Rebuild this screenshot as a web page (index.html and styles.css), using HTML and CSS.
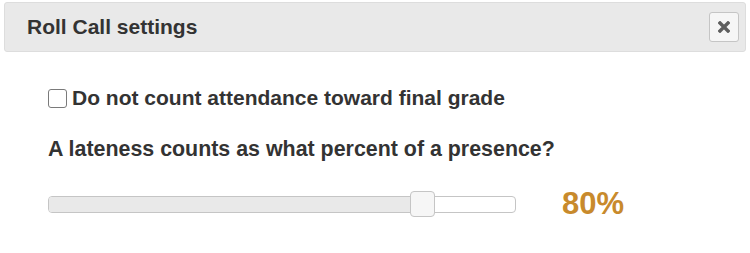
FILE: index.html
```html
<!DOCTYPE html>
<html>
<head>
<meta charset="utf-8">
<link rel="stylesheet" href="styles.css">
</head>
<body>
<div class="dialog">
  <div class="titlebar">
    <span class="title">Roll Call settings</span>
    <button class="close" aria-label="close">
      <svg width="12" height="12" viewBox="0 0 12 12"><path d="M2 2 L10 10 M10 2 L2 10" stroke="#5e5e5e" stroke-width="3.4" stroke-linecap="square"/></svg>
    </button>
  </div>
  <div class="content">
    <label class="check"><span class="box"></span>Do not count attendance toward final grade</label>
    <div class="question">A lateness counts as what percent of a presence?</div>
    <div class="sliderrow">
      <div class="track">
        <div class="fill" style="width: 80%"></div>
        <div class="handle" style="left: 80%"></div>
      </div>
      <span class="value">80%</span>
    </div>
  </div>
</div>
</body>
</html>
```
FILE: styles.css
```css
html, body { margin: 0; padding: 0; background: #fff; }
body { font-family: "Liberation Sans", Arial, sans-serif; color: #333; }
.dialog { padding: 2px 4px 0 4px; width: 742px; }
.titlebar {
  height: 48px;
  background: #e9e9e9;
  border: 1px solid #dddddd;
  border-radius: 3px;
  display: flex;
  align-items: center;
  justify-content: space-between;
  padding: 0 6px 0 22px;
}
.title { font-weight: bold; font-size: 21px; color: #333; }
.close {
  width: 30px; height: 30px;
  border: 1px solid #c5c5c5;
  border-radius: 3px;
  background: #f6f6f6;
  display: flex; align-items: center; justify-content: center;
  padding: 0;
}
.content { padding: 33px 0 0 44px; }
.check { display: flex; align-items: center; font-weight: bold; font-size: 21px; color: #333; height: 26px; }
.box {
  width: 17px; height: 17px;
  border: 1px solid #7a7a7a;
  border-radius: 3px;
  margin-right: 5px;
  background: #fff;
}
.question { font-weight: bold; font-size: 21.4px; color: #333; margin-top: 26px; }
.sliderrow { display: flex; align-items: center; margin-top: 24px; }
.track {
  position: relative;
  width: 466px; height: 15px;
  border: 1px solid #c5c5c5;
  border-radius: 4px;
  background: #fff;
}
.fill { height: 100%; background: #e9e9e9; border-radius: 3px 0 0 3px; }
.handle {
  position: absolute;
  top: -6px;
  width: 23px; height: 24px;
  margin-left: -12px;
  background: #f6f6f6;
  border: 1px solid #c5c5c5;
  border-radius: 4px;
}
.value { font-weight: bold; font-size: 31px; color: #c88a2c; margin-left: 46px; }
```
